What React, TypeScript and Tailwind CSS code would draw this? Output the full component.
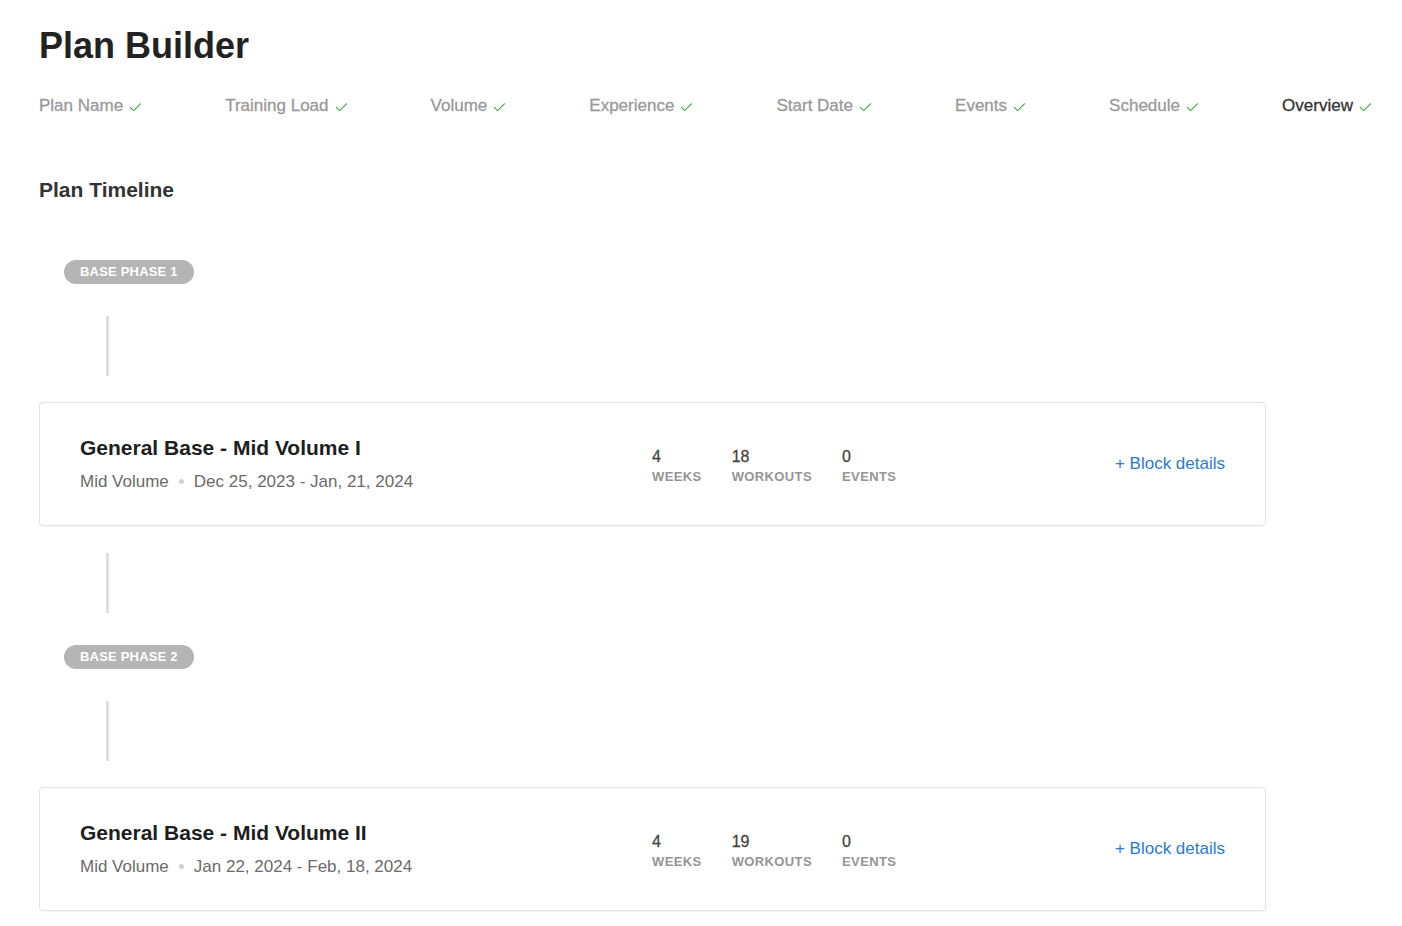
import { Check } from "lucide-react";

const steps = [
  "Plan Name",
  "Training Load",
  "Volume",
  "Experience",
  "Start Date",
  "Events",
  "Schedule",
  "Overview",
];

const blocks = [
  {
    phase: "BASE PHASE 1",
    title: "General Base - Mid Volume I",
    volume: "Mid Volume",
    dates: "Dec 25, 2023 - Jan, 21, 2024",
    weeks: 4,
    workouts: 18,
    events: 0,
  },
  {
    phase: "BASE PHASE 2",
    title: "General Base - Mid Volume II",
    volume: "Mid Volume",
    dates: "Jan 22, 2024 - Feb, 18, 2024",
    weeks: 4,
    workouts: 19,
    events: 0,
  },
];

const Connector = () => (
  <div className="ml-[67px] h-[60px] w-[3px] bg-[#dedede]" />
);

const Stat = ({ value, label }: { value: number; label: string }) => (
  <div className="flex flex-col">
    <span className="text-[16px] leading-[20px] text-[#444] [-webkit-text-stroke:0.3px_#444]">{value}</span>
    <span className="text-[13px] leading-[20px] font-bold tracking-[0.03em] text-[#959595]">{label}</span>
  </div>
);

const App = () => {
  return (
    <div
      className="min-h-screen bg-white pl-[39px] pr-[29px] pt-[24px] pb-[16px]"
      style={{ fontFamily: "'Liberation Sans', Arial, sans-serif" }}
    >
      <h1 className="text-[36px] leading-[44px] font-bold text-[#222]">Plan Builder</h1>

      <div className="mt-[26px] flex items-center justify-between">
        {steps.map((s, i) => (
          <div
            key={s}
            className={
              "flex items-center gap-[5px] text-[17px] leading-[24px] " +
              (i === steps.length - 1
                ? "text-[#333] [-webkit-text-stroke:0.3px_#333]"
                : "text-[#999] [-webkit-text-stroke:0.3px_#999]")
            }
          >
            <span>{s}</span>
            <Check size={15} strokeWidth={1.75} className="text-[#4caf50] mt-[2px]" />
          </div>
        ))}
      </div>

      <h2 className="mt-[58px] text-[21px] leading-[28px] font-bold text-[#333]">Plan Timeline</h2>

      <div className="mt-[55px] w-[1227px]">
        {blocks.map((b, i) => (
          <div key={b.phase}>
            {i > 0 && <div className="pt-[27px]"><Connector /></div>}
            <div className={i > 0 ? "pt-[31px]" : ""}>
              <span className="ml-[25px] inline-flex h-[24px] items-center rounded-full bg-[#b5b5b5] px-[16px] text-[13px] font-bold tracking-[0.015em] text-white">
                {b.phase}
              </span>
            </div>
            <div className="pt-[32px]">
              <Connector />
            </div>
            <div className="mt-[26px] flex h-[124px] items-center rounded-[4px] border border-[#e3e3e3] bg-white pl-[40px] pr-[40px] shadow-[0_1px_2px_rgba(0,0,0,0.04)]">
              <div className="w-[572px]">
                <div className="text-[21px] leading-[28px] font-bold text-[#1e1e1e]">{b.title}</div>
                <div className="mt-[8px] flex items-center text-[17px] leading-[24px] text-[#6b6b6b]">
                  <span>{b.volume}</span>
                  <span className="mx-[10px] inline-block h-[5px] w-[5px] rounded-full bg-[#d0d0d0]" />
                  <span>{b.dates}</span>
                </div>
              </div>
              <div className="mt-[6px] flex gap-[30px]">
                <Stat value={b.weeks} label="WEEKS" />
                <Stat value={b.workouts} label="WORKOUTS" />
                <Stat value={b.events} label="EVENTS" />
              </div>
              <a href="#" className="ml-auto text-[17px] text-[#2b7bd0]">
                + Block details
              </a>
            </div>
          </div>
        ))}
      </div>
    </div>
  );
};

export default App;
